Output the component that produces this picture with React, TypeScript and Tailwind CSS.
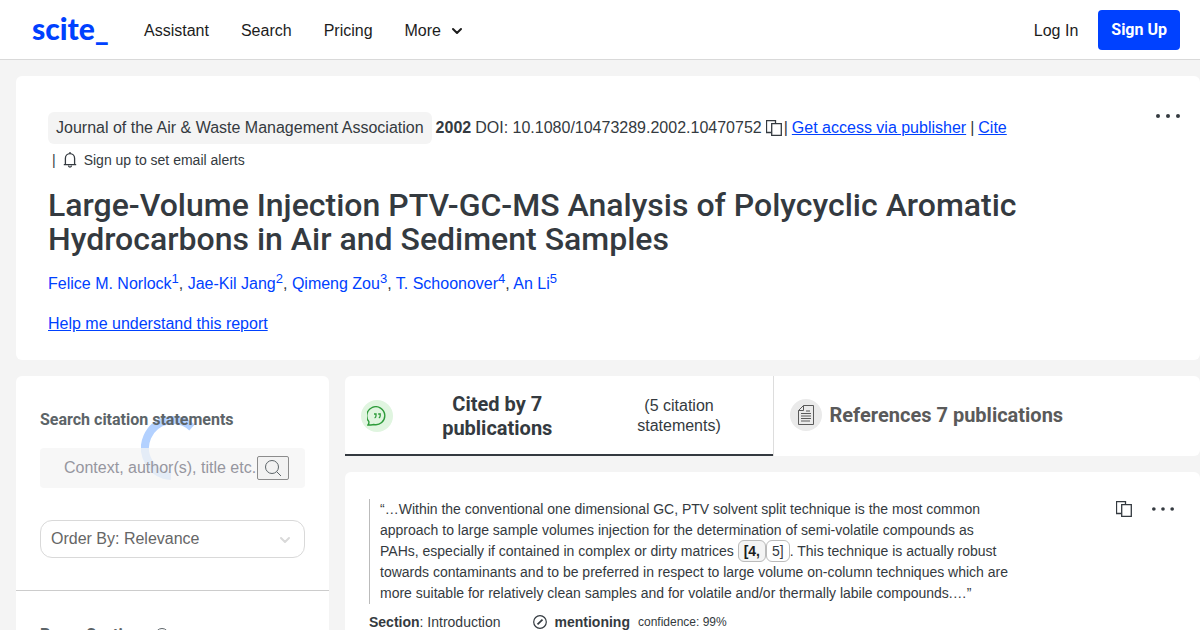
import React from 'react';
import { ChevronDown } from 'lucide-react';

const navLinks = ['Assistant', 'Search', 'Pricing'];

const authors = ['Felice M. Norlock', 'Jae-Kil Jang', 'Qimeng Zou', 'T. Schoonover', 'An Li'];

const CopyIcon = ({ className }: { className?: string }) => (
  <svg className={className} viewBox="0 0 16 16" fill="none" stroke="currentColor" strokeWidth="1.3" aria-hidden="true">
    <path d="M5.5 12.5h-5V.7h9v3" />
    <path d="M5.7 3.7h9.600v11.600H5.700z" />
  </svg>
);

const BellIcon = () => (
  <svg className="w-4 h-4" viewBox="0 0 16 16" fill="none" stroke="currentColor" strokeWidth="1.3" aria-hidden="true">
    <path d="M8 0v1.500M3.400 12.300V6.200a4.600 4.600 0 0 1 9.200 0v6.100M1.800 12.700h12.400" />
    <path d="M6.500 13.600a1.500 1.500 0 0 0 3 0" />
  </svg>
);

const QuoteBubbleIcon = () => (
  <svg className="w-5 h-5" viewBox="0 0 20 20" fill="none" stroke="currentColor" strokeWidth="1.4" aria-hidden="true">
    <path d="M.9 19c.9-.9 1.200-2.200.9-3.600A9 9 0 1 1 6.800 18.500c-1.900.3-3.800.8-5.900.5z" />
    <path d="M7 8h2v1.800c0 1.200-.6 1.900-1.400 2.200M11.200 8h2v1.800c0 1.200-.6 1.900-1.400 2.200" strokeWidth="1.300" />
  </svg>
);

const DocumentIcon = () => (
  <svg className="w-4 h-5" viewBox="0 0 16 20" fill="none" stroke="currentColor" aria-hidden="true">
    <path d="M5.500.500h10v19H.500v-14z M5.500.500v5h-5" />
    <path d="M8 6h4M3 8.500h10M3 11h10M3 13.500h10M3 16h9" />
  </svg>
);

const SearchIcon = () => (
  <svg className="w-4 h-4" viewBox="0 0 16 16" fill="none" stroke="currentColor" aria-hidden="true">
    <circle cx="7" cy="7" r="6.500" />
    <path d="M11.700 11.700 16 16" />
  </svg>
);

const MentioningIcon = () => (
  <svg className="w-3.5 h-3.5" viewBox="0 0 14 14" fill="none" stroke="currentColor" aria-hidden="true">
    <circle cx="7" cy="7" r="6.300" strokeWidth="1.200" />
    <path d="M4.500 9.300l5-4.600" strokeWidth="1.800" />
  </svg>
);

const HintIcon = () => (
  <svg className="w-3.5 h-3.5" viewBox="0 0 14 14" fill="none" stroke="currentColor" aria-hidden="true">
    <circle cx="7" cy="7" r="6.500" />
    <path d="M7 6v4M7 3.500v1" />
  </svg>
);

const Dots = ({ className }: { className?: string }) => (
  <svg className={className} viewBox="0 0 24 4" fill="currentColor" aria-hidden="true">
    <circle cx="2" cy="2" r="2" />
    <circle cx="12" cy="2" r="2" />
    <circle cx="22" cy="2" r="2" />
  </svg>
);

const Header = () => (
  <header className="flex items-center h-[60px] pl-8 pr-5 bg-white border-b border-[#d9d9d9] text-[#1c1c1c]">
    <a href="#" className="w-20 mr-8 pb-1 text-[30px] leading-8 font-black text-[#0041ff] font-['Lato']">
      scite_
    </a>
    <nav className="flex items-center gap-8 pt-0.5">
      {navLinks.map((link) => (
        <a key={link} href="#">
          {link}
        </a>
      ))}
      <button className="flex items-center gap-2">
        More
        <ChevronDown className="w-4 h-4" strokeWidth={3} />
      </button>
    </nav>
    <div className="flex items-center gap-5 ml-auto">
      <a href="#" className="pt-0.5">Log In</a>
      <button className="h-10 px-[13px] rounded bg-[#0041ff] text-white font-bold font-['Roboto']">Sign Up</button>
    </div>
  </header>
);

const PaperSummary = () => (
  <section className="flex items-start justify-between pl-8 pr-5 pt-9 pb-6 bg-white rounded-md">
    <div className="max-w-[980px]">
      <div className="flex items-center whitespace-nowrap">
        <span className="px-2 py-1 mr-1 rounded-md bg-[#f4f4f4]">Journal of the Air &amp; Waste Management Association</span>
        <strong className="mr-1">2002</strong>
        <span>DOI: 10.1080/10473289.2002.10470752</span>
        <button className="ml-1" aria-label="Copy DOI">
          <CopyIcon className="w-4 h-4" />
        </button>
        <span className="ml-0.5 mr-1">|</span>
        <a href="#" className="text-[#0041ff] underline">Get access via publisher</a>
        <span className="mx-1">|</span>
        <a href="#" className="text-[#0041ff] underline">Cite</a>
      </div>
      <div className="flex items-center h-8 pl-1 text-sm">
        <span className="mr-1.5">|</span>
        <button className="flex items-center gap-1.5">
          <BellIcon />
          Sign up to set email alerts
        </button>
      </div>
      <h1 className="mt-3 text-[32px] leading-[34px] font-medium font-['Roboto']">
        Large-Volume Injection PTV-GC-MS Analysis of Polycyclic Aromatic Hydrocarbons in Air and Sediment Samples
      </h1>
      <p className="mt-4">
        {authors.map((author, index) => (
          <React.Fragment key={author}>
            {index > 0 && ', '}
            <a href="#" className="text-[#0041ff]">
              {author}
              <sup className="text-[13px]">{index + 1}</sup>
            </a>
          </React.Fragment>
        ))}
      </p>
      <p className="mt-4">
        <a href="#" className="text-[#0041ff] underline">Help me understand this report</a>
      </p>
    </div>
    <button className="flex pt-0.5" aria-label="More options">
      <Dots className="w-6 h-1" />
    </button>
  </section>
);

const Filters = () => (
  <aside className="relative w-[313px] shrink-0 bg-white rounded-md text-[#5c6468]">
    <svg className="absolute left-[125px] top-10 w-16 h-16" viewBox="0 0 64 64" fill="none" aria-hidden="true">
      <path d="M51 11.500A28 28 0 1 0 30 60" stroke="#b3d1ff" strokeWidth="8" />
    </svg>
    <div className="relative px-6 pt-8 pb-8 border-b border-[#ccc]">
      <label htmlFor="search" className="block font-bold font-['Roboto']">Search citation statements</label>
      <div className="flex items-center h-10 mt-4 pl-6 pr-4 rounded bg-[#f4f4f4]/75">
        <input
          id="search"
          type="text"
          placeholder="Context, author(s), title etc."
          className="flex-1 min-w-0 bg-transparent outline-none placeholder:text-[#96969f]"
        />
        <button className="flex items-center justify-center w-8 h-6 border border-[#8c8c8c] rounded-xs bg-[#f2f2f2]" aria-label="Search">
          <SearchIcon />
        </button>
      </div>
      <div className="relative mt-8">
        <select aria-label="Order by" className="block w-full h-[38px] pl-2.5 border border-[#d9d9d9] rounded-xl appearance-none bg-white text-[#666]">
          <option>Order By: Relevance</option>
        </select>
        <ChevronDown className="absolute right-3 top-3 w-4 h-4 text-[#d9d9d9]" strokeWidth={3} />
      </div>
    </div>
    <h2 className="flex items-center gap-1.5 px-6 pt-8 font-bold font-['Roboto']">
      Paper Sections
      <HintIcon />
    </h2>
  </aside>
);

const Tabs = () => (
  <div className="grid grid-cols-2 h-20 bg-white rounded-md" role="tablist">
    <button role="tab" aria-selected="true" className="flex items-center px-4 pt-0.5 border-b-2 border-[#343a40] rounded-tl-md">
      <span className="flex items-center justify-center w-8 h-8 shrink-0 rounded-full bg-[#e0f5e0] text-[#2d9b3a]">
        <QuoteBubbleIcon />
      </span>
      <span className="flex-1 px-8 text-xl leading-6 font-bold font-['Roboto']">Cited by 7 publications</span>
      <span className="w-[155px] px-8 leading-5">(5 citation statements)</span>
    </button>
    <button role="tab" aria-selected="false" className="flex items-center gap-2 px-4 pb-0.5 border-l border-[#ddd] text-[#5a5a5a]">
      <span className="flex items-center justify-center w-8 h-8 rounded-full bg-[#eaeaea]">
        <DocumentIcon />
      </span>
      <span className="text-xl leading-6 font-bold font-['Roboto']">References 7 publications</span>
    </button>
  </div>
);

const Citation = () => (
  <article className="mt-4 px-6 py-[27px] bg-white rounded-md text-sm">
    <div className="flex items-start justify-between">
      <blockquote className="max-w-[645px] pl-2.5 border-l border-[#bbb] leading-[21px]">
        “…Within the conventional one dimensional GC, PTV solvent split technique is the most common approach to large
        sample volumes injection for the determination of semi-volatile compounds as PAHs, especially if contained in
        complex or dirty matrices{' '}
        <a href="#" className="px-[5px] py-0.5 border border-[#bbb] rounded-md bg-[#f4f4f4] font-bold text-[#1c1c1c]">[4,</a>
        <a href="#" className="px-[5px] py-0.5 border border-[#bbb] rounded-md">5]</a>. This technique is actually robust
        towards contaminants and to be preferred in respect to large volume on-column techniques which are more suitable
        for relatively clean samples and for volatile and/or thermally labile compounds.…”
      </blockquote>
      <div className="flex items-center gap-5 pt-0.5 pr-0.5">
        <button aria-label="Copy citation">
          <CopyIcon className="w-4 h-4" />
        </button>
        <button aria-label="More options">
          <Dots className="w-[22px] h-1" />
        </button>
      </div>
    </div>
    <div className="flex items-center mt-2">
      <span><strong>Section</strong>: Introduction</span>
      <span className="flex items-center gap-2 ml-8">
        <MentioningIcon />
        <strong>mentioning</strong>
        <span className="text-xs">confidence: 99%</span>
      </span>
    </div>
  </article>
);

const App = () => {
  return (
    <div className="h-screen overflow-hidden bg-[#f4f4f4] text-base text-[#343a40] font-['Liberation_Sans',sans-serif]">
      <Header />
      <main className="pl-4 pt-4">
        <PaperSummary />
        <div className="flex gap-4 mt-4">
          <Filters />
          <div className="flex-1 min-w-0">
            <Tabs />
            <Citation />
          </div>
        </div>
      </main>
    </div>
  );
};

export default App;
